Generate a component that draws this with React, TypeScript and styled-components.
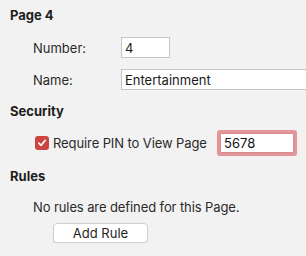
import React from 'react';
import styled, { createGlobalStyle } from 'styled-components';

const GlobalStyle = createGlobalStyle`
  html, body {
    margin: 0;
    padding: 0;
    background: #f2f2f2;
    overflow: hidden;
  }
  body {
    font-family: Inter, "Liberation Sans", sans-serif;
    font-size: 13px;
    color: #262626;
  }
`;

const App = () => (
  <>
    <GlobalStyle/>
    <Panel>
      <SectionHeader>Page 4</SectionHeader>
      <FormGrid>
        <Label>Number:</Label>
        <TextField $fill={false} defaultValue="4"/>
        <Label>Name:</Label>
        <TextField $fill defaultValue="Entertainment"/>
      </FormGrid>

      <SectionHeader $top={13}>Security</SectionHeader>
      <CheckRow>
        <CheckLabel>
          <CheckBox>
            <svg width="10" height="10" viewBox="0 0 10 10">
              <path d="M1.8 5.2 L4 7.4 L8.3 2.3" fill="none" stroke="#fff" strokeWidth="1.7" strokeLinecap="round" strokeLinejoin="round"/>
            </svg>
          </CheckBox>
          Require PIN to View Page
        </CheckLabel>
        <PinField defaultValue="5678"/>
      </CheckRow>

      <SectionHeader $top={15}>Rules</SectionHeader>
      <EmptyText>No rules are defined for this Page.</EmptyText>
      <PushButton>Add Rule</PushButton>
    </Panel>
  </>
);

const Panel = styled.div`
  display: flex;
  flex-direction: column;
  align-items: flex-start;
  padding: 7px 0 0 10px;
`;

const SectionHeader = styled.div<{ $top?: number }>`
  margin-top: ${props => props.$top || 0}px;
  font-weight: 700;
  font-size: 13px;
  line-height: 16px;
  color: #1e1e1e;
`;

const FormGrid = styled.div`
  display: grid;
  grid-template-columns: 88px 1fr;
  align-self: stretch;
  row-gap: 11px;
  align-items: center;
  margin: 14px -20px 0 23px;
`;

const Label = styled.span`
  color: #2a2a2a;
`;

const TextField = styled.input<{ $fill: boolean }>`
  box-sizing: border-box;
  width: ${props => (props.$fill ? '100%' : '49px')};
  min-width: 0;
  height: 21px;
  margin: 0;
  padding: 0 3px;
  border: 1px solid #c6c6c6;
  border-radius: 0;
  background: #fff;
  font: inherit;
  color: #1a1a1a;
  outline: none;
`;

const CheckRow = styled.div`
  display: flex;
  align-items: center;
  justify-content: space-between;
  width: 259px;
  margin: 14px 0 0 25px;
`;

const CheckLabel = styled.label`
  display: flex;
  align-items: center;
  gap: 4px;
  color: #2a2a2a;
  letter-spacing: -0.1px;
`;

const CheckBox = styled.span`
  display: inline-flex;
  align-items: center;
  justify-content: center;
  width: 14px;
  height: 14px;
  border-radius: 3px;
  background: #cd4540;
`;

const PinField = styled.input`
  box-sizing: border-box;
  width: 74px;
  height: 20px;
  margin: 0;
  padding: 0 3px;
  border: 1px solid #d98a8f;
  border-radius: 1px;
  background: #fff;
  font: inherit;
  color: #111;
  box-shadow: 0 0 0 3px #e3959a;
  outline: none;
`;

const EmptyText = styled.div`
  margin: 15px 0 0 23px;
  line-height: 16px;
  color: #2a2a2a;
  letter-spacing: -0.1px;
`;

const PushButton = styled.button`
  box-sizing: border-box;
  width: 95px;
  height: 20px;
  margin: 8px 0 0 43px;
  padding: 0;
  border: 1px solid #cfcfcf;
  border-radius: 4px;
  background: #fff;
  box-shadow: 0 1px 1px rgba(0, 0, 0, 0.08);
  font: inherit;
  color: #1f1f1f;
`;

export default App;
